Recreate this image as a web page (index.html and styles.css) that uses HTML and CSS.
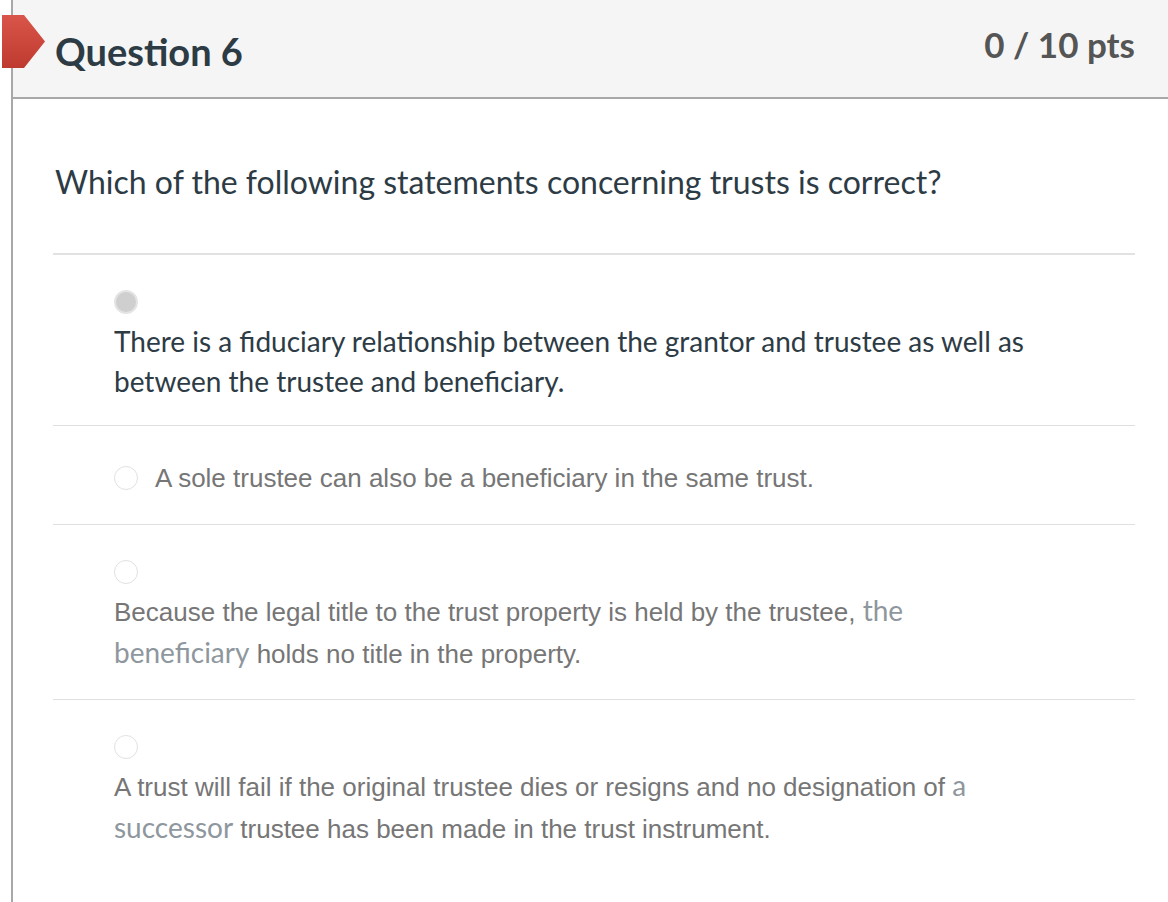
FILE: index.html
```html
<!DOCTYPE html>
<html>
<head>
<meta charset="utf-8">
<link rel="stylesheet" href="styles.css">
</head>
<body>
<div class="page">
  <div class="flag"></div>
  <div class="header">
    <h2 class="title">Question 6</h2>
    <div class="pts">0 / 10 pts</div>
  </div>
  <div class="body">
    <div class="qtext">Which of the following statements concerning trusts is correct?</div>
    <div class="answers">
      <div class="answer stacked">
        <span class="radio checked"></span>
        <div class="atext lato">There is a fiduciary relationship between the grantor and trustee as well as between the trustee and beneficiary.</div>
      </div>
      <div class="answer inline">
        <span class="radio"></span>
        <div class="atext helv">A sole trustee can also be a beneficiary in the same trust.</div>
      </div>
      <div class="answer stacked">
        <span class="radio"></span>
        <div class="atext helv">Because the legal title to the trust property is held by the trustee, <span class="soft">the beneficiary</span> holds no title in the property.</div>
      </div>
      <div class="answer stacked last">
        <span class="radio"></span>
        <div class="atext helv">A trust will fail if the original trustee dies or resigns and no designation of <span class="soft">a successor</span> trustee has been made in the trust instrument.</div>
      </div>
    </div>
  </div>
</div>
</body>
</html>
```

FILE: styles.css
```css
html, body {
  margin: 0;
  padding: 0;
  background: #fff;
}
body {
  font-family: Lato, "Liberation Sans", sans-serif;
  color: #2d3b45;
}
.page {
  margin-left: 11px;
  border-left: 2px solid #a8a8a8;
  min-height: 902px;
  position: relative;
}
.flag {
  position: absolute;
  left: -11px;
  top: 15px;
  width: 43px;
  height: 53px;
  background: linear-gradient(#d9554b, #bf3a2e);
  clip-path: polygon(0 0, 22px 0, 43px 50%, 22px 100%, 0 100%);
}
.header {
  background: #f5f5f5;
  height: 97px;
  border-bottom: 2px solid #a8a8a8;
  display: flex;
  justify-content: space-between;
  align-items: flex-start;
  padding: 0 33px 0 42px;
}
.title {
  margin: 0;
  padding-top: 28px;
  font-size: 38px;
  font-weight: 700;
  line-height: 46px;
  color: #2d3b45;
}
.pts {
  padding-top: 23px;
  font-size: 35px;
  font-weight: 700;
  line-height: 42px;
  color: #555;
}
.body {
  padding: 0 33px 0 40px;
}
.qtext {
  font-size: 32px;
  line-height: 40px;
  padding: 63px 0 51px 2px;
  border-bottom: 2px solid #e2e2e2;
}
.answer {
  padding-left: 61px;
  border-bottom: 1px solid #e0e0e0;
}
.answer.last {
  border-bottom: none;
}
.answer.stacked {
  padding-top: 35px;
  padding-bottom: 24px;
}
.answer.inline {
  display: flex;
  align-items: center;
  gap: 17px;
  padding-top: 31px;
  padding-bottom: 25px;
}
.radio {
  display: block;
  flex: none;
  width: 24px;
  height: 24px;
  box-sizing: border-box;
  border-radius: 50%;
  border: 1.5px solid #e1e1e1;
  background: #fff;
}
.radio.checked {
  background: #cfcfcf;
  border: 2px solid #e4e4e4;
}
.stacked .radio {
  margin-bottom: 7px;
}
.atext {
  max-width: 920px;
}
.atext.lato {
  font-family: Lato, sans-serif;
  font-size: 28px;
  line-height: 40px;
  color: #2d3b45;
}
.atext.helv {
  font-family: "Liberation Sans", Arial, sans-serif;
  font-size: 26px;
  line-height: 42px;
  color: #767676;
}
.soft {
  font-family: Lato, sans-serif;
  font-size: 28px;
  line-height: 1;
  color: #8f979e;
}
```
